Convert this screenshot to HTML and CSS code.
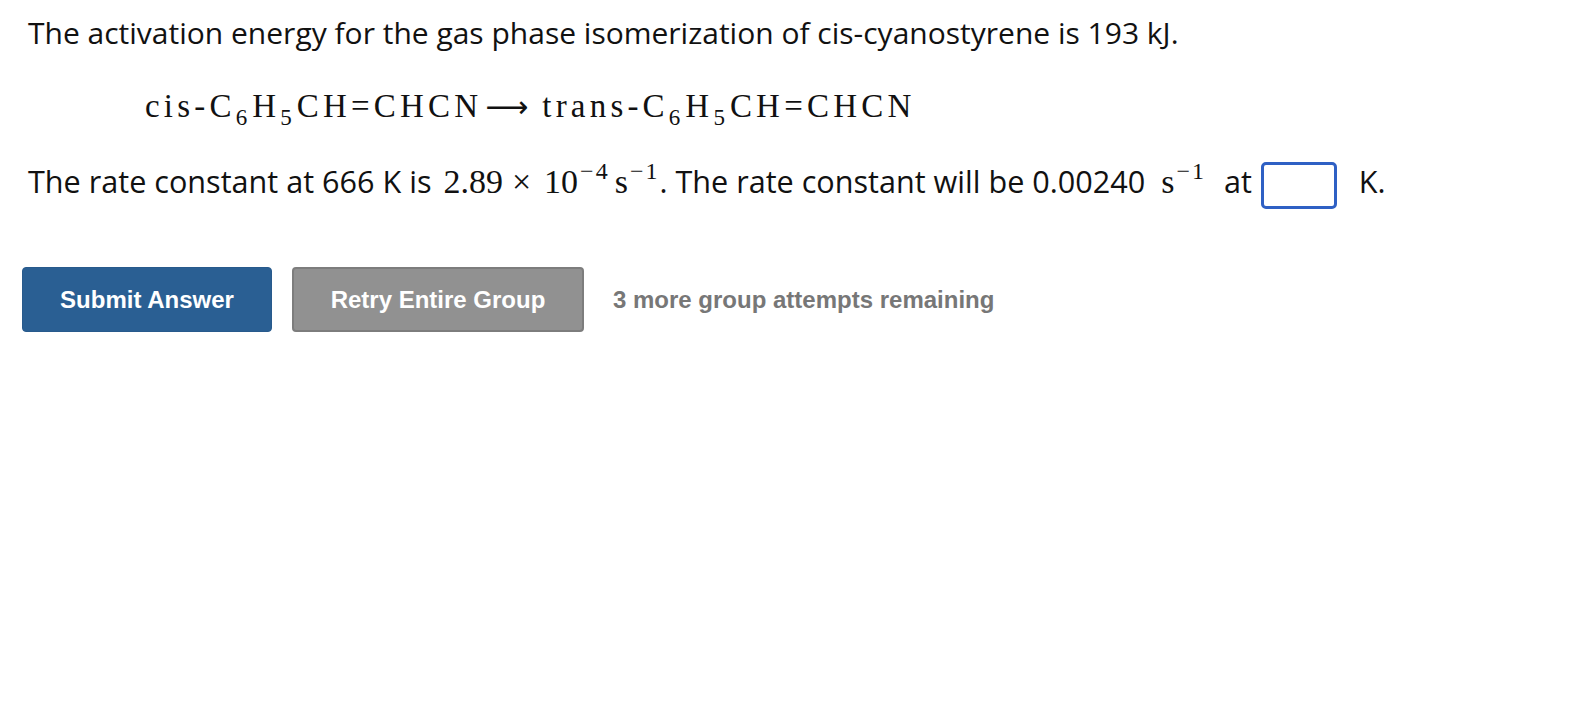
FILE: index.html
```html
<!doctype html>
<html>
  <head>
    <meta charset="utf-8">
    <link rel="stylesheet" href="styles.css">
  </head>
  <body>
    <div class="question">
      <p class="intro">The activation energy for the gas phase isomerization of cis-cyanostyrene is 193 kJ.</p>
      <div class="equation">
        <span class="formula">cis-C<sub>6</sub>H<sub>5</sub>CH=CHCN</span>
        <span class="arrow">&#10230;</span>
        <span class="formula">trans-C<sub>6</sub>H<sub>5</sub>CH=CHCN</span>
      </div>
      <p class="rate">The rate constant at 666 K is <span class="math lead">2.89<span class="times">&times;</span>10<sup>&minus;4</sup><span class="unit-s">s</span><sup>&minus;1</sup></span>. The rate constant will be 0.00240 <span class="math tail"><span class="unit-s">s</span><sup>&minus;1</sup></span> at <input class="answer" type="text" value=""><span class="unit">K.</span></p>
    </div>

    <div class="actions">
      <button class="btn submit">Submit Answer</button>
      <button class="btn retry">Retry Entire Group</button>
      <span class="attempts">3 more group attempts remaining</span>
    </div>
  </body>
</html>
```

FILE: styles.css
```css
body {
  margin: 0;
  background: #fff;
  color: #111;
  font-family: "Open Sans", sans-serif;
}
.question {
  padding: 13px 0 0 28px;
}
.question p {
  margin: 0;
  font-size: 30px;
  line-height: 40px;
}
.equation {
  margin: 33px 0 0 117px;
  display: flex;
  align-items: baseline;
  font-family: "Liberation Serif", serif;
  font-size: 33px;
  line-height: 40px;
}
.formula {
  letter-spacing: 4.2px;
}
.formula sub {
  font-family: "Liberation Serif", serif;
  font-size: 23px;
  line-height: 0;
  margin-right: 5px;
  letter-spacing: 0;
}
.arrow {
  font-family: "DejaVu Sans", sans-serif;
  font-size: 30px;
  margin: 0 14px 0 3px;
}
.math {
  font-family: "Liberation Serif", serif;
  font-size: 34px;
}
.math.lead {
  margin-left: 4px;
}
.math.lead .unit-s {
  margin-left: 5px;
}
.math.tail {
  margin-right: 10px;
}
.math.tail .unit-s {
  margin-left: 8px;
}
.times {
  margin: 0 13px 0 9px;
}
.math sup {
  font-size: 24px;
  line-height: 0;
  vertical-align: 14px;
  margin-left: 2px;
  letter-spacing: 2px;
}
.question p.rate {
  margin-top: 34px;
  font-size: 30.6px;
}
.answer {
  width: 70px;
  height: 41px;
  box-sizing: content-box;
  border: 3px solid #2f60c4;
  border-radius: 5px;
  padding: 0;
  margin: 0 22px 0 1px;
  vertical-align: 3px;
  outline: none;
}
.actions {
  display: flex;
  align-items: center;
  gap: 20px;
  margin: 58px 0 0 22px;
}
.btn {
  height: 65px;
  border-radius: 4px;
  font-family: "Liberation Sans", Arial, sans-serif;
  font-weight: bold;
  font-size: 24px;
  color: #fff;
  cursor: pointer;
}
.submit {
  width: 250px;
  background: #2a5f93;
  border: 1px solid #285a8c;
}
.retry {
  width: 292px;
  background: #919191;
  border: 2px solid #7d7d7d;
}
.attempts {
  margin-left: 9px;
  font-family: "Liberation Sans", Arial, sans-serif;
  font-weight: bold;
  font-size: 24px;
  color: #777;
}
```
